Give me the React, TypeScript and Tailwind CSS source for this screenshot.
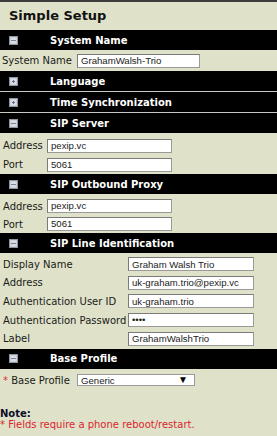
import React from "react";

const FONT = { fontFamily: 'Verdana, "DejaVu Sans", sans-serif' };

function Toggle({ open }: { open: boolean }) {
  return (
    <svg width="9" height="9" viewBox="0 0 9 9" className="block">
      <rect x="0.5" y="0.5" width="8" height="8" fill="#c3c9d3" stroke="#8d95a3" />
      <rect x="1.5" y="1.5" width="6" height="6" fill="#d9dde4" />
      {open ? (
        <rect x="2" y="4" width="5" height="1" fill="#7c8494" />
      ) : (
        <>
          <rect x="3" y="4" width="3" height="1" fill="#6c7484" />
          <rect x="4" y="3" width="1" height="3" fill="#6c7484" />
        </>
      )}
    </svg>
  );
}

function Header({ title, open = true }: { title: string; open?: boolean }) {
  return (
    <div className="flex h-[20px] items-center bg-black">
      <div className="w-[50px] pl-[9px]">
        <Toggle open={open} />
      </div>
      <span className="text-[10px] font-bold text-white">{title}</span>
    </div>
  );
}

function Field({ value, width }: { value: string; width: number }) {
  return (
    <div
      className="flex h-[14px] items-center border border-[#9a9a9a] border-t-[#7a7a7a] border-l-[#7a7a7a] bg-white pl-[3px] text-[9.6px] leading-none text-[#222]"
      style={{ width, fontFamily: '"Liberation Sans", Arial, sans-serif' }}
    >
      {value}
    </div>
  );
}

function Row({
  label,
  value,
  labelW,
  inputW,
  h = 19,
}: {
  label: string;
  value: string;
  labelW: number;
  inputW: number;
  h?: number;
}) {
  return (
    <div className="flex items-center" style={{ height: h }}>
      <span className="shrink-0 pl-[3px] text-[10px] text-[#1a1a1a]" style={{ width: labelW }}>
        {label}
      </span>
      <Field value={value} width={inputW} />
    </div>
  );
}

export default function App() {
  return (
    <div className="h-[436px] w-[277px] overflow-hidden bg-[#dfe2c9]" style={FONT}>
      <div className="h-[2px] bg-[#3c3c3c]" />
      <div className="flex h-[28px] items-center pl-[9px] text-[13px] font-bold text-[#111]">
        Simple Setup
      </div>

      <Header title="System Name" />
      <div className="flex h-[21px] items-center">
        <span className="w-[77px] shrink-0 pl-[2px] text-[10px] text-[#1a1a1a]">System Name</span>
        <Field value="GrahamWalsh-Trio" width={123} />
      </div>

      <Header title="Language" open={false} />
      <div className="h-[1px] bg-[#c8c8c8]" />
      <Header title="Time Synchronization" open={false} />
      <div className="h-[1px] bg-[#c8c8c8]" />
      <Header title="SIP Server" />
      <div className="pt-[3px]">
        <Row label="Address" value="pexip.vc" labelW={47} inputW={125} />
        <Row label="Port" value="5061" labelW={47} inputW={125} />
      </div>

      <Header title="SIP Outbound Proxy" />
      <div className="pt-[3px]">
        <Row label="Address" value="pexip.vc" labelW={47} inputW={125} h={18} />
        <Row label="Port" value="5061" labelW={47} inputW={125} h={18} />
      </div>

      <Header title="SIP Line Identification" />
      <div className="pt-[2px] pb-[1px]">
        <Row label="Display Name" value="Graham Walsh Trio" labelW={128} inputW={126} h={18.6} />
        <Row label="Address" value="uk-graham.trio@pexip.vc" labelW={128} inputW={126} h={18.6} />
        <Row label="Authentication User ID" value="uk-graham.trio" labelW={128} inputW={126} h={18.6} />
        <Row label="Authentication Password" value="••••" labelW={128} inputW={126} h={18.6} />
        <Row label="Label" value="GrahamWalshTrio" labelW={128} inputW={126} h={18.6} />
      </div>

      <Header title="Base Profile" />
      <div className="flex h-[23px] items-center">
        <span className="w-[77px] shrink-0 pl-[3px] text-[10px] text-[#1a1a1a]">
          <span className="text-[#e0303a]">*</span> Base Profile
        </span>
        <div
          className="flex h-[12px] w-[118px] items-center justify-between border border-[#9a9a9a] bg-white pl-[3px] pr-[6px] text-[9.6px] leading-none text-[#222]"
          style={{ fontFamily: '"Liberation Sans", Arial, sans-serif' }}
        >
          <span>Generic</span>
          <span className="text-[10px] text-black">▼</span>
        </div>
      </div>

      <div className="pt-[16px] text-[10px] leading-[11px]">
        <div className="font-bold text-[#0d0d2b]">Note:</div>
        <div className="text-[#d9262e]">* Fields require a phone reboot/restart.</div>
      </div>
    </div>
  );
}
